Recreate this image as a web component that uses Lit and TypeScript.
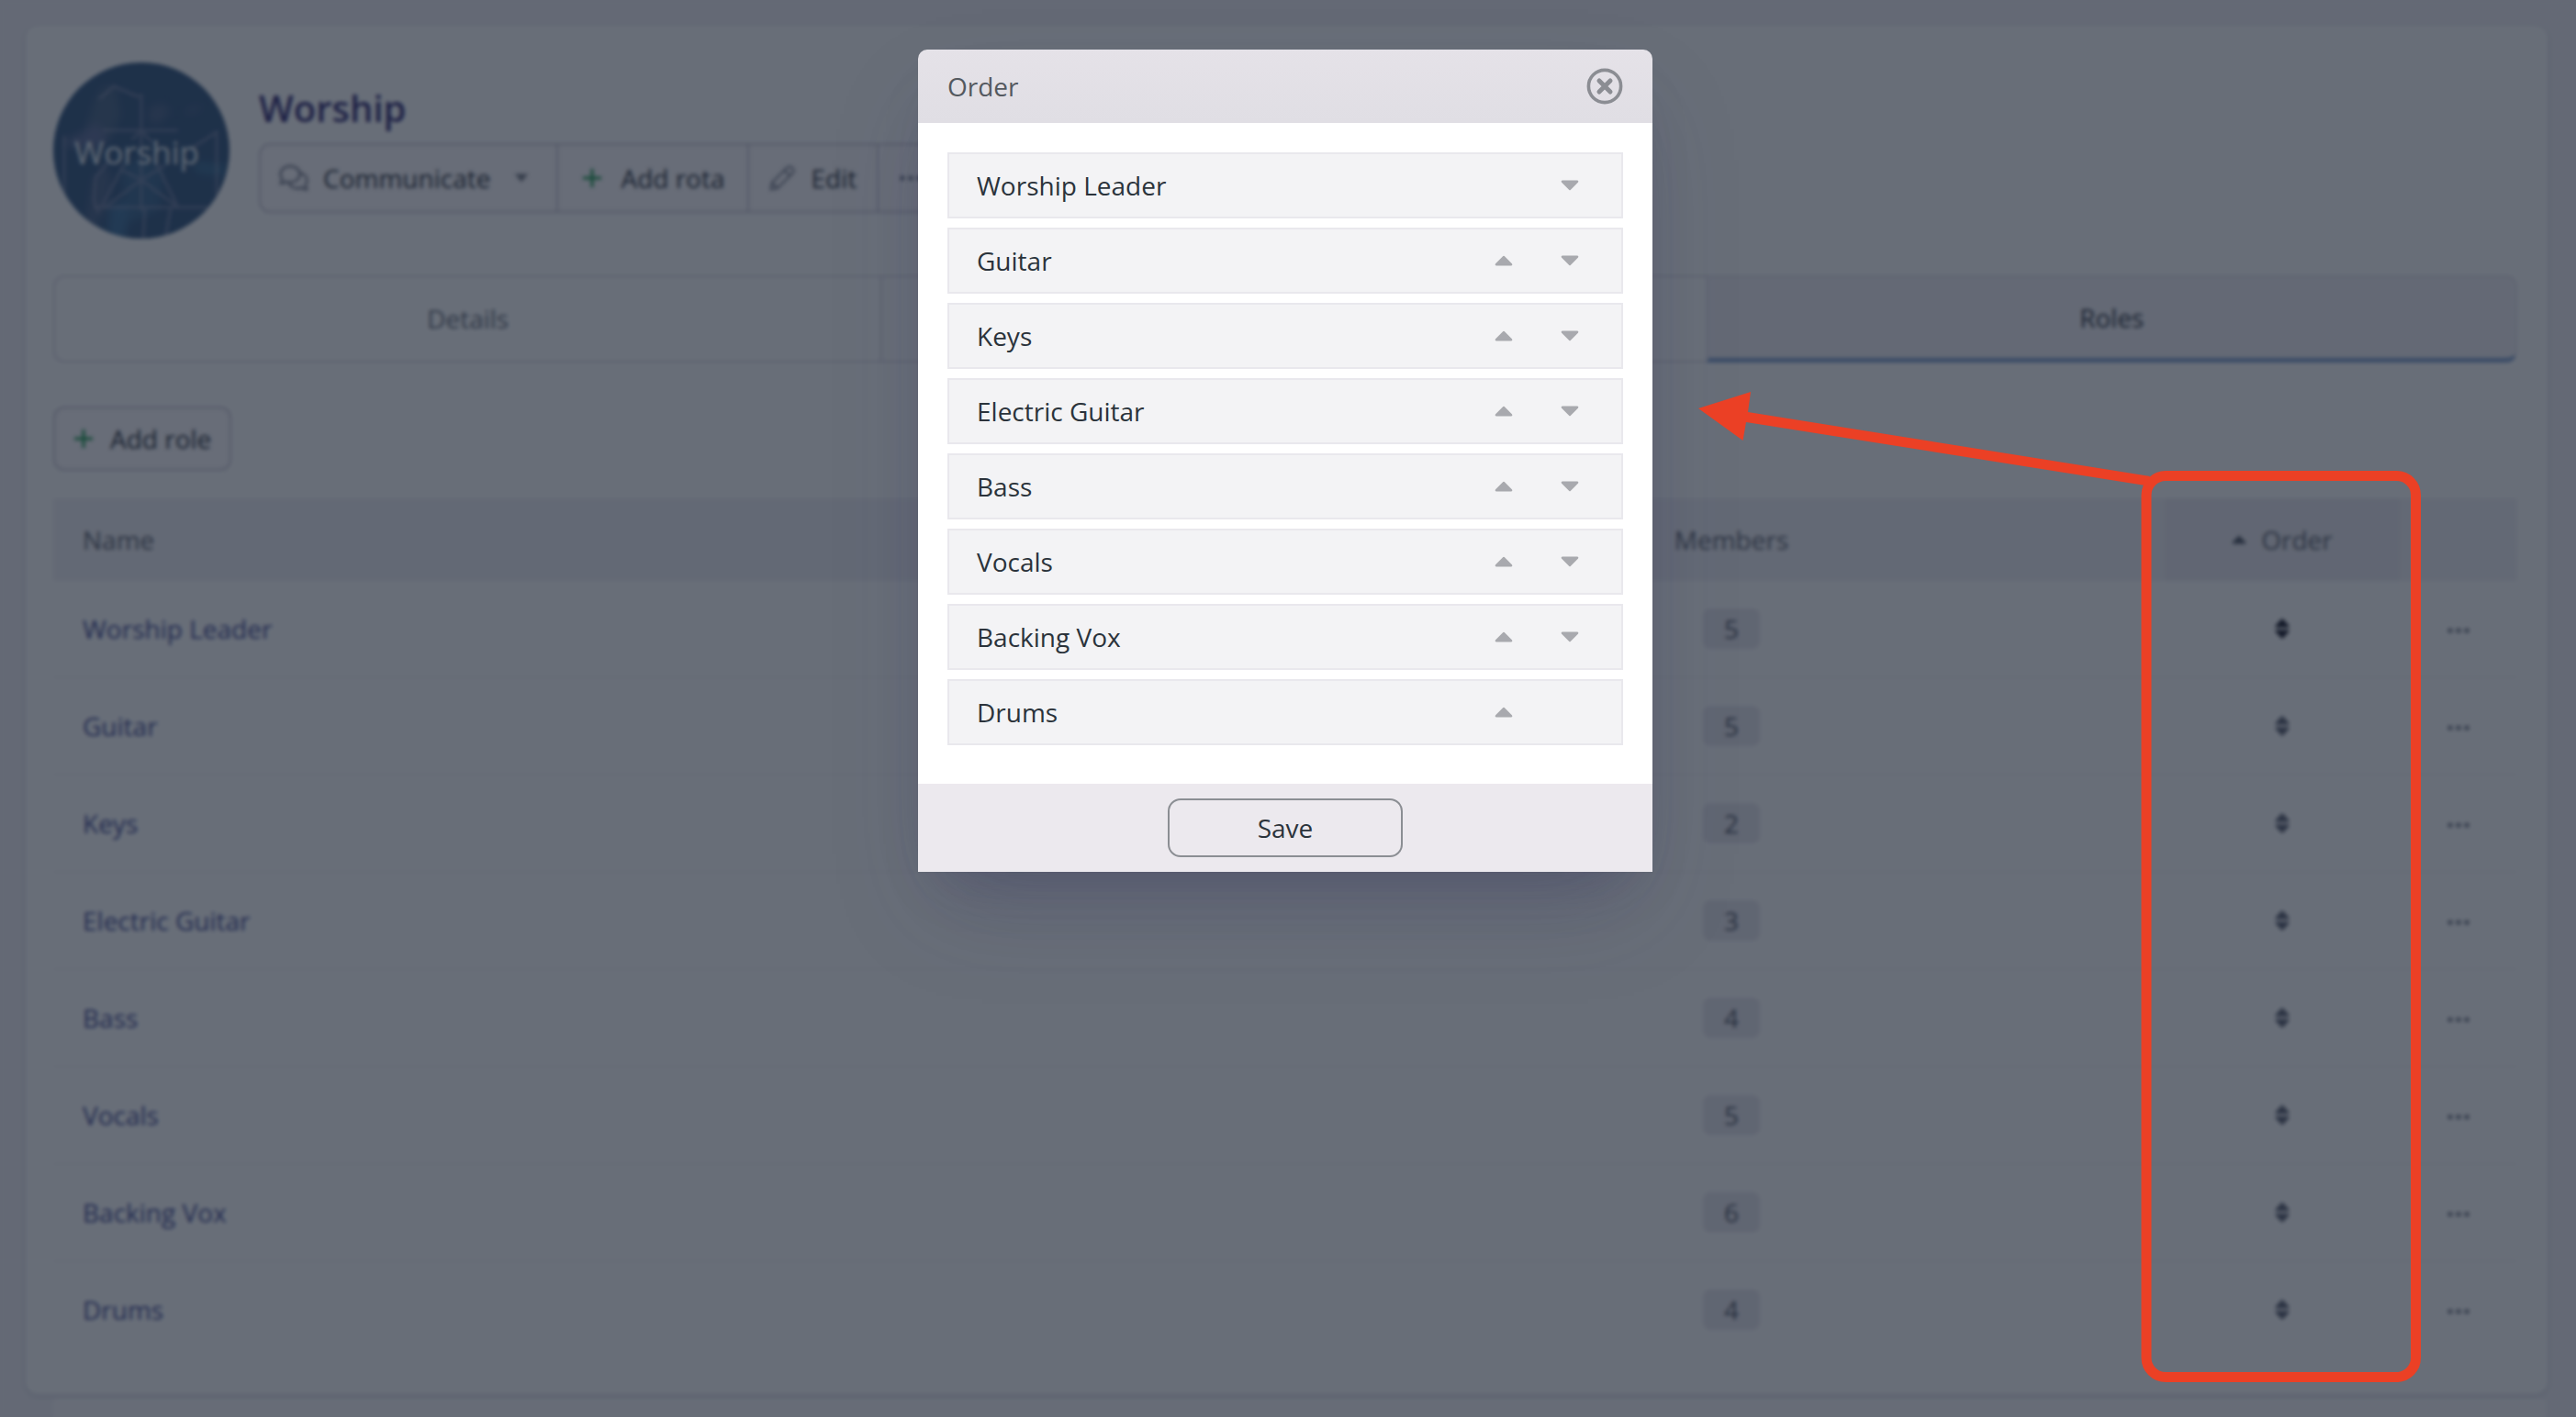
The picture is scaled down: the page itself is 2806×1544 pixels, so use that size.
import { LitElement, html, css, svg } from "lit";
import { customElement, state } from "lit/decorators.js";

interface Role {
  name: string;
  members: number;
}

const roles: Role[] = [
  { name: "Worship Leader", members: 5 },
  { name: "Guitar", members: 5 },
  { name: "Keys", members: 2 },
  { name: "Electric Guitar", members: 3 },
  { name: "Bass", members: 4 },
  { name: "Vocals", members: 5 },
  { name: "Backing Vox", members: 6 },
  { name: "Drums", members: 4 },
];

const plusIcon = html`<svg class="plus" viewBox="0 0 22 22" aria-hidden="true">
  <path d="M11 1v20M1 11h20" fill="none" stroke="#008c38" stroke-width="3" />
</svg>`;

const dotsIcon = html`<svg class="dots" viewBox="0 0 26 8" aria-hidden="true">
  <circle cx="4" cy="4" r="2.600" /><circle cx="13" cy="4" r="2.600" /><circle cx="22" cy="4" r="2.600" />
</svg>`;

const caret = (up: boolean) => html`<svg class="caret" viewBox="0 0 20 12" aria-hidden="true">
  ${up
    ? svg`<path d="M9.300 1a1 1 0 0 1 1.400 0l8.200 8.300c.8.900.4 2.200-.9 2.200H2c-1.300 0-1.700-1.300-.9-2.200z" />`
    : svg`<path d="M9.300 11a1 1 0 0 0 1.400 0l8.200-8.300c.8-.9.4-2.200-.9-2.200H2C.7.5.3 1.800 1.100 2.700z" />`}
</svg>`;

@customElement("role-page")
class RolePage extends LitElement {
  static styles = css`
    :host {
      display: block;
      padding: 28px 31px 0 28px;
      color: #39404f;
      font-size: 28px;
      line-height: 40px;
    }
    .card {
      background: #fff;
      border-radius: 14px;
      padding: 40px 33px 38px 30px;
      box-shadow: 0 2px 6px rgba(30, 30, 80, 0.15);
    }
    .head {
      display: flex;
      gap: 32px;
      align-items: flex-start;
    }
    .avatar {
      width: 192px;
      height: 192px;
      display: block;
      flex: none;
    }
    .title {
      margin: 22px 0 10px;
      font-size: 40px;
      line-height: 56px;
      font-weight: 600;
      color: #1c1464;
    }
    button {
      font: inherit;
      color: inherit;
      background: none;
      border: 0;
      padding: 0;
      margin: 0;
    }
    .group {
      display: flex;
      border: 2px solid #c6c2d0;
      border-radius: 12px;
      background: #fdfafd;
      height: 76px;
      box-sizing: border-box;
    }
    .group button {
      display: flex;
      align-items: center;
      padding: 0 22px;
      gap: 18px;
      font-weight: 500;
      color: #101726;
      border-right: 2px solid #c6c2d0;
    }
    .group button:last-child {
      border-right: 0;
    }
    .group .menu {
      padding: 0 30px 0 20px;
      gap: 16px;
    }
    .group .menu .caret {
      margin-left: 10px;
    }
    .group .wide {
      padding: 0 24px 0 26px;
      gap: 20px;
    }
    .chat {
      width: 32px;
      height: 30px;
    }
    .pencil {
      width: 28px;
      height: 28px;
    }
    .plus {
      width: 22px;
      height: 22px;
    }
    .dots {
      width: 26px;
      height: 8px;
      fill: #5a6070;
    }
    .caret {
      width: 16px;
      height: 10px;
      fill: #6a6e7a;
    }
    .tabs {
      display: grid;
      grid-template-columns: 901fr 899fr 883fr;
      margin-top: 40px;
      height: 95px;
    }
    .tab {
      display: flex;
      align-items: center;
      justify-content: center;
      text-decoration: none;
      color: #555b69;
      border: 2px solid #dad6e1;
      border-right-width: 0;
      padding-bottom: 2px;
    }
    .tab:first-child {
      border-radius: 12px 0 0 12px;
    }
    .tab.active {
      color: #101726;
      font-weight: 500;
      background: #f2f0f5;
      border-color: #e2dfe7;
      border-right-width: 2px;
      border-bottom: 5px solid #7395c8;
      border-radius: 0 12px 12px 0;
      padding-bottom: 0;
    }
    .add {
      display: flex;
      align-items: center;
      gap: 18px;
      height: 70px;
      margin: 48px 0 30px;
      padding: 0 20px;
      border: 2px solid #c6c2d0;
      border-radius: 12px;
      background: #fdfafd;
      font-weight: 500;
      color: #101726;
    }
    .roles {
      width: 100%;
      border-collapse: collapse;
      table-layout: fixed;
    }
    .roles th {
      height: 90px;
      padding: 0 32px;
      font-weight: 400;
      color: #4a4f5c;
      background: #f0eff4;
    }
    .roles td {
      height: 104px;
      padding: 0 32px;
      text-align: center;
      border-bottom: 2px solid #f5f1f5;
    }
    .roles tr:last-child td {
      border-bottom-color: #fff;
    }
    .roles .name {
      text-align: left;
    }
    .roles th.members {
      width: 880px;
    }
    .roles th.order {
      width: 192px;
      background: #e9e7ee;
    }
    .roles th.actions {
      width: 64px;
    }
    .roles a {
      color: #2c3484;
      text-decoration: none;
    }
    .sorted {
      display: flex;
      justify-content: center;
      align-items: center;
      gap: 16px;
    }
    .sorted .caret {
      fill: #39404f;
    }
    .badge {
      display: inline-block;
      width: 62px;
      line-height: 44px;
      border-radius: 8px;
      background: #e7e5ec;
    }
    td button {
      display: block;
      margin: 0 auto;
      line-height: 0;
    }
    .sort {
      width: 16px;
      height: 22px;
      fill: #4a4e60;
    }
    .sort.current {
      fill: #000010;
    }
    .next {
      margin: 5px 2px 0 30px;
      height: 100px;
      background: #fbf9fc;
      border-radius: 4px;
    }
  `;

  render() {
    return html`
      <main class="card">
        <header class="head">
          <svg class="avatar" viewBox="0 0 192 192" role="img" aria-label="Worship">
            <defs>
              <clipPath id="disc"><circle cx="96" cy="96" r="96" /></clipPath>
              <filter id="soft"><feGaussianBlur stdDeviation="4" /></filter>
            </defs>
            <g clip-path="url(#disc)">
              <rect width="192" height="192" fill="#204672" />
              <g filter="url(#soft)" fill="#4c5f85" opacity=".65">
                <path d="M36 70 46 38 56 25 68 27 74 58 60 86 30 88z" fill="#44607f" />
                <path d="M10 86 30 78 46 66 60 82 48 94 20 92z" fill="#6a70a0" />
                <path d="M104 50 118 44 128 52 118 66 104 66z" />
                <path d="M74 116 96 104 120 118 116 160 80 176z" fill="#2f6490" />
                <path d="M62 156 82 150 78 192 60 192z" fill="#3676a8" />
                <path d="M152 108 188 112 186 124 156 120z" fill="#2f709a" />
                <path d="M44 124 58 110 64 130 56 160 40 190 34 180z" />
                <path d="M142 58 150 48 166 48 150 56z" />
              </g>
              <g fill="none" stroke="#8f92b4" stroke-width="3" opacity=".5">
                <path d="M96 34v128M54 74h82M44 158h136M12 80v70M178 74v70M178 76 150 94" />
                <path d="M50 40 66 26 94 38M96 128 56 158M96 128 136 158M112 110 136 158M78 110 52 158" />
                <path d="M60 108 46 126 44 150 50 164M100 158 98 192M128 158 122 192M72 116 96 128 122 112" />
                <path d="M86 84 96 74 108 88" />
              </g>
            </g>
            <text x="91" y="111" text-anchor="middle" font-size="35" font-weight="500" fill="#e4eef4">Worship</text>
          </svg>
          <div>
            <h1 class="title">Worship</h1>
            <div class="group">
              <button type="button" class="menu">
                <svg class="chat" viewBox="0 0 32 30" fill="none" stroke="#6b6f80" stroke-width="2.400" stroke-linejoin="round" aria-hidden="true">
                  <path d="M12 2C6 2 1.500 6 1.500 11c0 2 .8 3.900 2 5.400C3.200 18.500 2.400 20 1.500 21c2.500 0 4.500-.8 6-2 1.400.5 2.900.8 4.500.8 6 0 10.500-4 10.500-9S18 2 12 2z" />
                  <path d="M22.500 9.500c4.500.8 8 4 8 8 0 2-.8 3.900-2 5.400.3 2 1.100 3.600 2 4.600-2.500 0-4.500-.8-6-2-1.400.5-2.900.8-4.500.8-4.200 0-7.700-2.300-9.300-5.500" />
                </svg>
                <span>Communicate</span>
                <svg class="caret" viewBox="0 0 20 12" aria-hidden="true"><path d="M1 .5h18L10 11.500z" /></svg>
              </button>
              <button type="button" class="wide">${plusIcon}<span>Add rota</span></button>
              <button type="button">
                <svg class="pencil" viewBox="0 0 28 28" fill="none" stroke="#6b6f80" stroke-width="2" stroke-linejoin="round" aria-hidden="true">
                  <path d="M1.500 26.500 3 19 19.500 2.500a3.500 3.500 0 0 1 5 0l1 1a3.500 3.500 0 0 1 0 5L9 25zM16.500 5.500l6 6M3 19l6 6" />
                </svg>
                <span>Edit</span>
              </button>
              <button type="button" aria-label="More">${dotsIcon}</button>
            </div>
          </div>
        </header>
        <nav class="tabs">
          <a class="tab" href="#details">Details</a>
          <a class="tab" href="#members"></a>
          <a class="tab active" href="#roles">Roles</a>
        </nav>
        <button type="button" class="add">${plusIcon}<span>Add role</span></button>
        <table class="roles">
          <thead>
            <tr>
              <th class="name">Name</th>
              <th class="members">Members</th>
              <th class="order"><span class="sorted">${caret(true)}Order</span></th>
              <th class="actions"></th>
            </tr>
          </thead>
          <tbody>
            ${roles.map(
              (role, i) => html`<tr>
                <td class="name"><a href="#role">${role.name}</a></td>
                <td><span class="badge">${role.members}</span></td>
                <td>
                  <button type="button" aria-label="Change order">
                    <svg class="sort ${i === 0 ? "current" : ""}" viewBox="0 0 16 22" aria-hidden="true">
                      <path d="M7.200.6a1.200 1.200 0 0 1 1.600 0l6.200 6.600c1 1.200.4 2.600-1.200 2.600H2.200C.6 9.800 0 8.400 1 7.200zM7.200 21.400a1.200 1.200 0 0 0 1.600 0l6.200-6.600c1-1.200.4-2.600-1.200-2.600H2.200c-1.600 0-2.200 1.400-1.200 2.600z" />
                    </svg>
                  </button>
                </td>
                <td><button type="button" aria-label="More">${dotsIcon}</button></td>
              </tr>`
            )}
          </tbody>
        </table>
      </main>
      <div class="next"></div>
    `;
  }
}

@customElement("order-dialog")
class OrderDialog extends LitElement {
  @state() private items: string[] = roles.map((r) => r.name);

  static styles = css`
    :host {
      display: block;
      width: 800px;
      font-size: 28px;
      line-height: 40px;
      color: #2b333b;
      border-radius: 10px 10px 0 0;
      box-shadow: 0 50px 100px -20px rgba(50, 50, 93, 0.25), 0 30px 60px -30px rgba(50, 50, 93, 0.3);
    }
    .bar {
      display: flex;
      align-items: center;
      justify-content: space-between;
      height: 80px;
      padding: 0 32px;
      border-radius: 10px 10px 0 0;
      background: linear-gradient(#e5e2e8, #e0dee4);
    }
    .heading {
      margin: 0;
      font-size: 28px;
      font-weight: 400;
      color: #54595f;
    }
    button {
      font: inherit;
      color: inherit;
      background: none;
      border: 0;
      padding: 0;
      margin: 0;
    }
    .close {
      display: block;
      width: 40px;
      height: 40px;
    }
    .body {
      background: #fff;
      padding: 32px 32px 42px;
    }
    .list {
      display: flex;
      flex-direction: column;
      gap: 10px;
      list-style: none;
      margin: 0;
      padding: 0;
    }
    .item {
      display: grid;
      grid-template-columns: 1fr 72px 72px;
      align-items: center;
      height: 72px;
      box-sizing: border-box;
      padding: 0 20px 0 30px;
      border: 2px solid #e9e8ed;
      background: #f3f3f5;
    }
    .move {
      height: 40px;
      line-height: 0;
    }
    .up {
      grid-column: 2;
    }
    .down {
      grid-column: 3;
    }
    .caret {
      width: 20px;
      height: 12px;
      fill: #a8a9ae;
    }
    .foot {
      display: flex;
      justify-content: center;
      padding: 16px;
      background: #ece9ee;
    }
    .save {
      width: 256px;
      height: 64px;
      border: 2px solid #8b8e93;
      border-radius: 14px;
    }
  `;

  private move(i: number, by: number) {
    const next = [...this.items];
    [next[i], next[i + by]] = [next[i + by], next[i]];
    this.items = next;
  }

  render() {
    const last = this.items.length - 1;
    return html`
      <div class="bar">
        <h2 class="heading">Order</h2>
        <button type="button" aria-label="Close">
          <svg class="close" viewBox="0 0 40 40" fill="none" stroke="#8b8d93" aria-hidden="true">
            <circle cx="20" cy="20" r="17.600" stroke-width="3.600" />
            <path d="M14 14 26 26M26 14 14 26" stroke-width="5" stroke-linecap="round" />
          </svg>
        </button>
      </div>
      <div class="body">
        <ol class="list">
          ${this.items.map(
            (name, i) => html`<li class="item">
              <span>${name}</span>
              ${i > 0
                ? html`<button type="button" class="move up" aria-label="Move up" @click=${() => this.move(i, -1)}>${caret(true)}</button>`
                : ""}
              ${i < last
                ? html`<button type="button" class="move down" aria-label="Move down" @click=${() => this.move(i, 1)}>${caret(false)}</button>`
                : ""}
            </li>`
          )}
        </ol>
      </div>
      <div class="foot"><button type="button" class="save">Save</button></div>
    `;
  }
}

@customElement("app-root")
class AppRoot extends LitElement {
  static styles = css`
    :host {
      display: block;
      position: relative;
      height: 100vh;
      overflow: hidden;
      background: #f2f0f5;
      font-family: "Open Sans", "Noto Sans", sans-serif;
    }
    .overlay {
      position: absolute;
      inset: 0;
      display: flex;
      justify-content: center;
      align-items: flex-start;
      padding: 54px 6px 0 0;
      background: rgba(30, 39, 54, 0.67);
      backdrop-filter: blur(2px);
    }
    .marker {
      position: absolute;
      top: 427px;
      right: 169px;
      width: 787px;
      height: 1080px;
    }
  `;

  render() {
    return html`
      <role-page></role-page>
      <div class="overlay"><order-dialog></order-dialog></div>
      <svg class="marker" viewBox="0 0 787 1080" aria-hidden="true">
        <rect x="488" y="91.500" width="293.500" height="982" rx="21" fill="none" stroke="#eb4025" stroke-width="11" />
        <path d="M0 18 57 0 54 22 492 92 487 102 52 33 48.500 53z" fill="#eb4025" />
      </svg>
    `;
  }
}
